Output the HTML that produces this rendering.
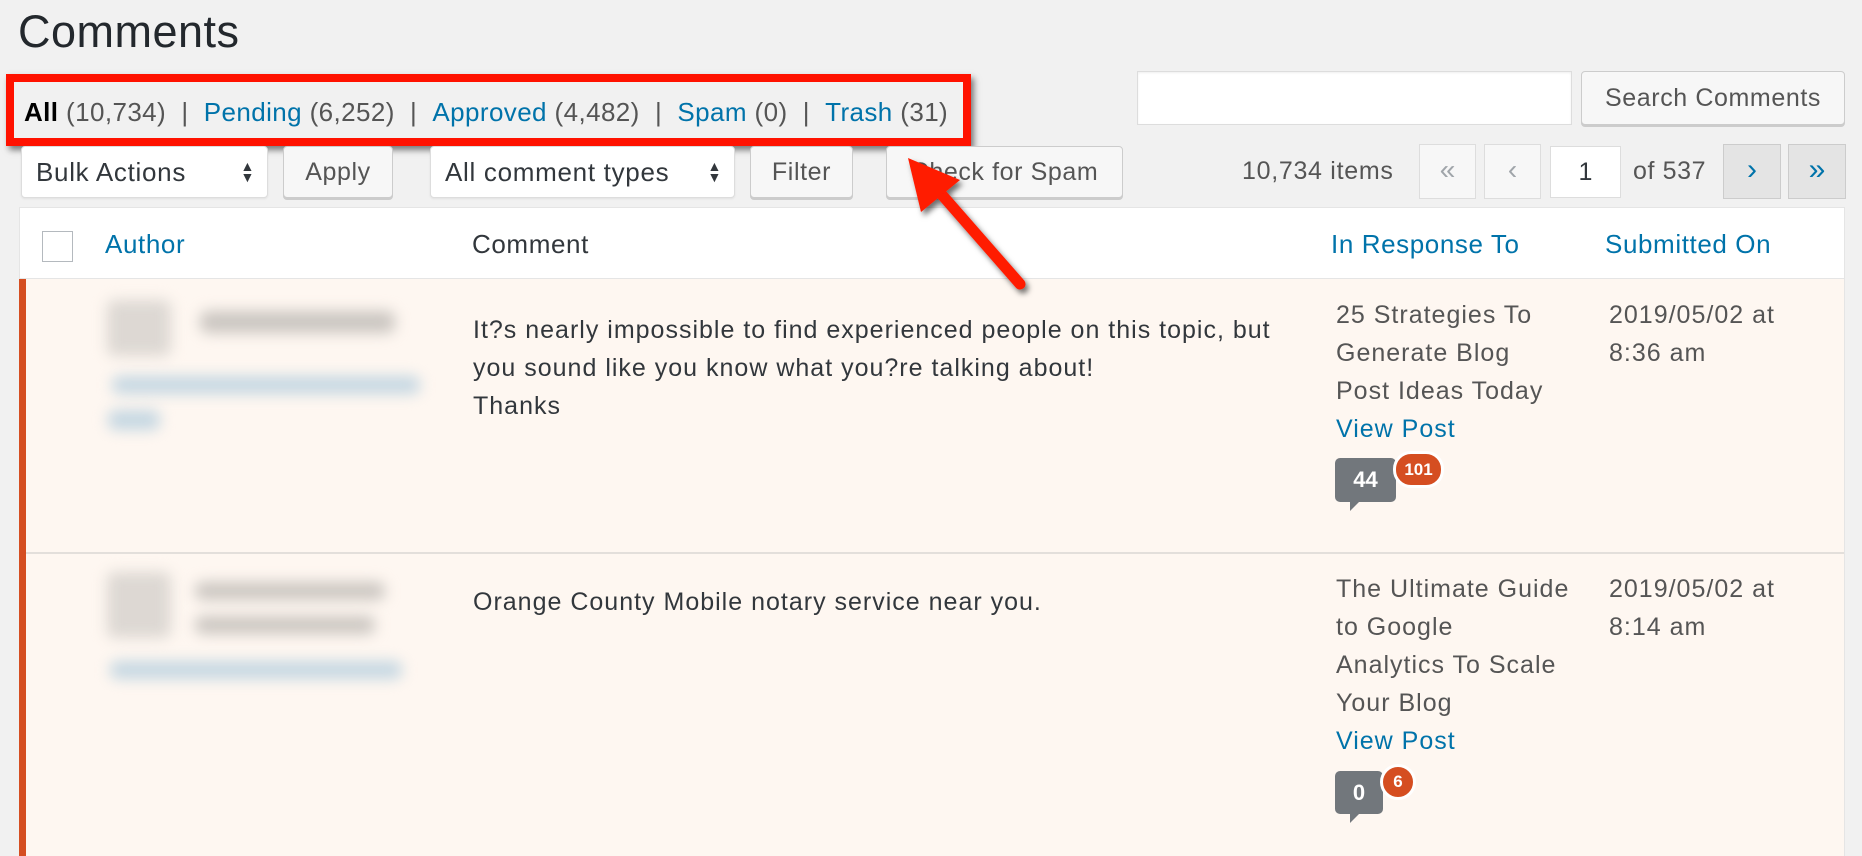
<!DOCTYPE html>
<html><head><meta charset="utf-8"><style>
*{box-sizing:border-box;margin:0;padding:0}
html,body{width:1862px;height:856px;overflow:hidden}
body{background:#f1f1f1;font-family:"Liberation Sans",Arial,sans-serif;color:#23282d;position:relative}
.a{position:absolute;white-space:nowrap}
.btn{position:absolute;background:#f7f7f7;border:1px solid #ccc;border-radius:4px;box-shadow:0 2px 0 #ccc;color:#555;font-size:25px;letter-spacing:.6px;display:flex;align-items:center;justify-content:center}
.sel{position:absolute;background:#fff;border:1px solid #ddd;border-radius:4px;box-shadow:0 1px 2px rgba(0,0,0,.07);font-size:26px;letter-spacing:.7px;color:#32373c;display:flex;align-items:center;padding-left:14px}
.blue{color:#0073aa}
.bl{position:absolute;filter:blur(7px);border-radius:8px}
.t{font-size:25px;letter-spacing:1px}
</style></head><body>
<div class="a" style="left:18px;top:6px;font-size:45px;letter-spacing:.5px;color:#23282d">Comments</div>

<div class="a" style="left:6px;top:74px;width:965px;height:72px;border:8px solid #ff1200;box-shadow:3px 4px 6px rgba(0,0,0,.5)"></div>
<div class="a" style="left:24px;top:97px;font-size:26px;letter-spacing:.4px;color:#555"><b style="color:#000;font-weight:600">All</b> (10,734) &nbsp;| &nbsp;<span class="blue">Pending</span> (6,252) &nbsp;| &nbsp;<span class="blue">Approved</span> (4,482) &nbsp;| &nbsp;<span class="blue">Spam</span> (0) &nbsp;| &nbsp;<span class="blue">Trash</span> (31)</div>

<div class="a" style="left:1137px;top:71px;width:435px;height:54px;background:#fff;border:1px solid #ddd;box-shadow:inset 0 1px 2px rgba(0,0,0,.07)"></div>
<div class="btn" style="left:1581px;top:71px;width:264px;height:54px">Search Comments</div>

<div class="sel" style="left:21px;top:146px;width:247px;height:52px">Bulk Actions<span style="position:absolute;right:12px;font-size:14px;line-height:11px;text-align:center">▲<br>▼</span></div>
<div class="btn" style="left:283px;top:146px;width:110px;height:52px">Apply</div>
<div class="sel" style="left:430px;top:146px;width:305px;height:52px">All comment types<span style="position:absolute;right:12px;font-size:14px;line-height:11px">▲<br>▼</span></div>
<div class="btn" style="left:750px;top:146px;width:103px;height:52px">Filter</div>
<div class="btn" style="left:886px;top:146px;width:237px;height:52px">Check for Spam</div>

<div class="a" style="left:1242px;top:157px;font-size:25px;letter-spacing:.7px;color:#555">10,734 items</div>
<div class="a" style="left:1419px;top:144px;width:57px;height:55px;border:1px solid #ddd;background:#f7f7f7;color:#a0a5aa;font-size:28px;text-align:center;line-height:50px">«</div>
<div class="a" style="left:1484px;top:144px;width:57px;height:55px;border:1px solid #ddd;background:#f7f7f7;color:#a0a5aa;font-size:28px;text-align:center;line-height:50px">‹</div>
<div class="a" style="left:1550px;top:146px;width:71px;height:52px;border:1px solid #ddd;background:#fff;font-size:25px;text-align:center;line-height:50px;color:#32373c">1</div>
<div class="a" style="left:1633px;top:157px;font-size:25px;letter-spacing:.6px;color:#555">of 537</div>
<div class="a" style="left:1723px;top:144px;width:58px;height:55px;border:1px solid #ccc;background:#e4e4e4;color:#0073aa;font-size:30px;text-align:center;line-height:50px">›</div>
<div class="a" style="left:1788px;top:144px;width:58px;height:55px;border:1px solid #ccc;background:#e4e4e4;color:#0073aa;font-size:30px;text-align:center;line-height:50px">»</div>

<div class="a" style="left:19px;top:207px;width:1826px;height:649px;background:#fef7f1;border:1px solid #e5e5e5;border-bottom:none"></div>
<div class="a" style="left:19px;top:207px;width:1826px;height:72px;background:#fff;border:1px solid #e5e5e5"></div>
<div class="a" style="left:42px;top:231px;width:31px;height:31px;border:1px solid #b4b9be;background:#fff"></div>
<div class="a blue" style="left:105px;top:229px;font-size:26px;letter-spacing:.6px">Author</div>
<div class="a" style="left:472px;top:229px;font-size:26px;letter-spacing:.6px;color:#32373c">Comment</div>
<div class="a blue" style="left:1331px;top:229px;font-size:26px;letter-spacing:.6px">In Response To</div>
<div class="a blue" style="left:1605px;top:229px;font-size:26px;letter-spacing:.6px">Submitted On</div>

<div class="a" style="left:19px;top:279px;width:7px;height:577px;background:#d54e21"></div>
<div class="a" style="left:26px;top:552px;width:1818px;height:2px;background:#e3dfdb"></div>

<div class="bl" style="left:107px;top:300px;width:64px;height:56px;background:#ddd8d3"></div>
<div class="bl" style="left:200px;top:311px;width:195px;height:22px;background:#cbc6c1"></div>
<div class="bl" style="left:112px;top:376px;width:308px;height:18px;background:#c5d7e2"></div>
<div class="bl" style="left:108px;top:410px;width:52px;height:20px;background:#c5d7e2"></div>
<div class="bl" style="left:107px;top:572px;width:64px;height:66px;background:#ddd8d3"></div>
<div class="bl" style="left:195px;top:582px;width:190px;height:18px;background:#cbc6c1"></div>
<div class="bl" style="left:195px;top:616px;width:180px;height:18px;background:#cbc6c1"></div>
<div class="bl" style="left:110px;top:661px;width:292px;height:18px;background:#c5d7e2"></div>

<div class="a t" style="left:473px;top:311px;line-height:38px;color:#32373c">It?s nearly impossible to find experienced people on this topic, but<br>you sound like you know what you?re talking about!<br>Thanks</div>
<div class="a t" style="left:473px;top:588px;color:#32373c">Orange County Mobile notary service near you.</div>

<div class="a t" style="left:1336px;top:296px;line-height:38px;color:#555">25 Strategies To<br>Generate Blog<br>Post Ideas Today<br><span class="blue">View Post</span></div>
<div class="a t" style="left:1609px;top:296px;line-height:38px;color:#555">2019/05/02 at<br>8:36 am</div>
<div class="a" style="left:1335px;top:458px;width:61px;height:44px;background:#72777c;border-radius:5px;color:#fff;font-size:22px;font-weight:bold;text-align:center;line-height:44px">44</div>
<div class="a" style="left:1350px;top:501px;width:0;height:0;border-right:10px solid transparent;border-top:10px solid #72777c"></div>
<div class="a" style="left:1393px;top:451px;width:51px;height:37px;background:#d54e21;border:3px solid #fff;border-radius:18px;color:#fff;font-size:17px;font-weight:bold;text-align:center;line-height:31px">101</div>

<div class="a t" style="left:1336px;top:570px;line-height:38px;color:#555">The Ultimate Guide<br>to Google<br>Analytics To Scale<br>Your Blog<br><span class="blue">View Post</span></div>
<div class="a t" style="left:1609px;top:570px;line-height:38px;color:#555">2019/05/02 at<br>8:14 am</div>
<div class="a" style="left:1335px;top:771px;width:48px;height:43px;background:#72777c;border-radius:5px;color:#fff;font-size:22px;font-weight:bold;text-align:center;line-height:43px">0</div>
<div class="a" style="left:1350px;top:813px;width:0;height:0;border-right:10px solid transparent;border-top:10px solid #72777c"></div>
<div class="a" style="left:1380px;top:764px;width:36px;height:36px;background:#d54e21;border:3px solid #fff;border-radius:50%;color:#fff;font-size:17px;font-weight:bold;text-align:center;line-height:30px">6</div>

<svg class="a" style="left:0;top:0" width="1862" height="856">
<defs><filter id="s" x="-20%" y="-20%" width="140%" height="140%"><feDropShadow dx="3" dy="4" stdDeviation="3" flood-color="#000" flood-opacity=".55"/></filter></defs>
<g filter="url(#s)" fill="#ff1a00">
<line x1="1020" y1="284" x2="936" y2="188" stroke="#ff1a00" stroke-width="11" stroke-linecap="round"/>
<polygon points="908,158 960,180 921,212"/>
</g>
</svg>
</body></html>
